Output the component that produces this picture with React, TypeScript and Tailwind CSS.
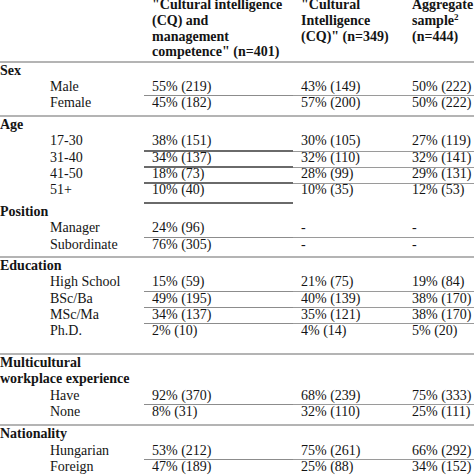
type Row = { label: string; cq: string; cqOnly: string; all: string };

type Section = {
  title: string[];
  rows: Row[];
  padBottom: string;
  dark?: boolean;
};

const sections: Section[] = [
  {
    title: ["Sex"],
    padBottom: "pb-[3px]",
    rows: [
      { label: "Male", cq: "55% (219)", cqOnly: "43% (149)", all: "50% (222)" },
      { label: "Female", cq: "45% (182)", cqOnly: "57% (200)", all: "50% (222)" },
    ],
  },
  {
    title: ["Age"],
    padBottom: "pb-[3px]",
    dark: true,
    rows: [
      { label: "17-30", cq: "38% (151)", cqOnly: "30% (105)", all: "27% (119)" },
      { label: "31-40", cq: "34% (137)", cqOnly: "32% (110)", all: "32% (141)" },
      { label: "41-50", cq: "18% (73)", cqOnly: "28% (99)", all: "29% (131)" },
      { label: "51+", cq: "10% (40)", cqOnly: "10% (35)", all: "12% (53)" },
    ],
  },
  {
    title: ["Position"],
    padBottom: "pb-[3px]",
    rows: [
      { label: "Manager", cq: "24% (96)", cqOnly: "-", all: "-" },
      { label: "Subordinate", cq: "76% (305)", cqOnly: "-", all: "-" },
    ],
  },
  {
    title: ["Education"],
    padBottom: "pb-[13px]",
    rows: [
      { label: "High School", cq: "15% (59)", cqOnly: "21% (75)", all: "19% (84)" },
      { label: "BSc/Ba", cq: "49% (195)", cqOnly: "40% (139)", all: "38% (170)" },
      { label: "MSc/Ma", cq: "34% (137)", cqOnly: "35% (121)", all: "38% (170)" },
      { label: "Ph.D.", cq: "2% (10)", cqOnly: "4% (14)", all: "5% (20)" },
    ],
  },
  {
    title: ["Multicultural", "workplace experience"],
    padBottom: "pb-[4px]",
    rows: [
      { label: "Have", cq: "92% (370)", cqOnly: "68% (239)", all: "75% (333)" },
      { label: "None", cq: "8% (31)", cqOnly: "32% (110)", all: "25% (111)" },
    ],
  },
  {
    title: ["Nationality"],
    padBottom: "pb-0",
    rows: [
      { label: "Hungarian", cq: "53% (212)", cqOnly: "75% (261)", all: "66% (292)" },
      { label: "Foreign", cq: "47% (189)", cqOnly: "25% (88)", all: "34% (152)" },
    ],
  },
];

const cols = "grid grid-cols-[50px_94px_149px_111px_70px]";

const DataRow = ({ row, underline, dark }: { row: Row; underline: boolean; dark?: boolean }) => {
  const first = underline
    ? dark
      ? "border-b-2 border-[#6a6a6a]"
      : "border-b border-[#8c8c8c]"
    : "";
  const rest = underline ? "border-b border-[#9a9a9a]" : "";
  return (
    <div className={`${cols} h-[16.4px] leading-[16.4px]`}>
      <div />
      <div className="whitespace-nowrap">{row.label}</div>
      <div className={`pl-2 whitespace-nowrap ${first}`}>{row.cq}</div>
      <div className={`pl-2 whitespace-nowrap ${rest}`}>{row.cqOnly}</div>
      <div className={`pl-2 whitespace-nowrap overflow-hidden ${rest}`}>{row.all}</div>
    </div>
  );
};

const SectionBlock = ({ section }: { section: Section }) => {
  const last = sections[sections.length - 1] === section;
  return (
    <>
      <div className={section.padBottom}>
        {section.title.map((t) => (
          <div key={t} className="h-[16.4px] leading-[16.4px] font-bold whitespace-nowrap">
            {t}
          </div>
        ))}
        {section.rows.map((row, i) => (
          <DataRow
            key={row.label}
            row={row}
            underline={i < section.rows.length - 1}
            dark={section.dark}
          />
        ))}
      </div>
      {!last &&
        (section.dark ? (
          <div className="ml-[144px] w-[149px] h-[2px] bg-[#6a6a6a]" />
        ) : (
          <div className="h-[2px] bg-[#b4b4b4]" />
        ))}
    </>
  );
};

export default function App() {
  return (
    <div className="w-[474px] h-[475px] overflow-hidden bg-white text-[#141414] text-[14px] font-['Liberation_Serif',serif]">
      <div className={`${cols} -mt-[3px] h-[63.6px] leading-[15.8px] font-bold`}>
        <div className="col-span-2" />
        <div className="pl-2 whitespace-nowrap">
          "Cultural intelligence
          <br />
          (CQ) and
          <br />
          management
          <br />
          competence" (n=401)
        </div>
        <div className="pl-2 whitespace-nowrap">
          "Cultural
          <br />
          Intelligence
          <br />
          (CQ)" (n=349)
        </div>
        <div className="pl-2 whitespace-nowrap overflow-hidden">
          Aggregate
          <br />
          sample<sup className="text-[9px]">2</sup>
          <br />
          (n=444)
        </div>
      </div>
      <div className="h-[2px] bg-[#b4b4b4]" />
      {sections.map((s) => (
        <SectionBlock key={s.title[0]} section={s} />
      ))}
    </div>
  );
}
